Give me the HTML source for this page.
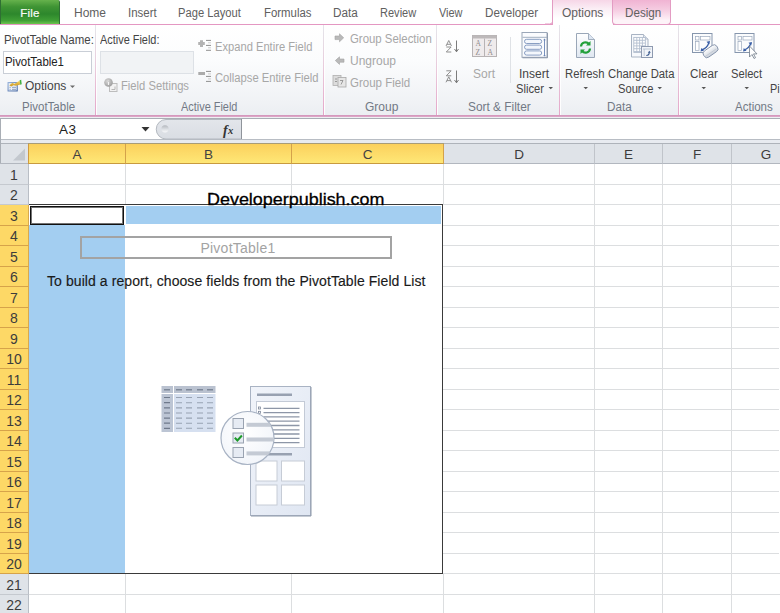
<!DOCTYPE html>
<html><head><meta charset="utf-8">
<style>
*{box-sizing:border-box;margin:0;padding:0}
html,body{width:780px;height:613px;overflow:hidden;background:#fff}
body{position:relative;font-family:"Liberation Sans",sans-serif;font-size:11px;color:#444}
.a{position:absolute;white-space:nowrap}
.t{font-size:12px;line-height:14px;transform:scaleX(0.91);transform-origin:0 0}
/* tab bar */
#tabbar{left:0;top:0;width:780px;height:24px;background:#fff}
#file{left:0;top:0;width:60px;height:24px;border-radius:0 2px 0 0;background:linear-gradient(#66b24c 0%,#3f9434 28%,#2d872c 58%,#3f9e35 85%,#6cc450 100%);border-left:1px solid #2f6f33;border-right:1px solid #2f6f33;color:#f4f8f2;text-align:center;line-height:26px;font-size:11.5px;letter-spacing:0.2px;-webkit-text-stroke:0.2px #fff}
.tab{top:6px;color:#606060;transform:none}
#ribbon{left:0;top:24px;width:780px;height:92px;background:linear-gradient(#ffffff 0%,#fbfcfd 40%,#f0f2f5 85%,#ebeef2 100%);border-top:1px solid #e497c2}
#opttab{left:552px;top:0;width:61px;height:25px;border-left:1px solid #e39cc3;background:linear-gradient(#f6d6e7,#fbeef5 35%,#ffffff 75%)}
#destab{left:612px;top:0;width:59px;height:25px;border-radius:0 0 4px 4px;background:linear-gradient(#f0b3d3,#f6cfe3 45%,#fdf3f8 85%);border:1px solid #e39cc3;border-top:none}
.sep{top:25px;width:2px;height:90px;background:linear-gradient(90deg,transparent 0,transparent 0) ,linear-gradient(#e4e6ea,#e9c9db 50%,#e5a6c9);background-size:1px 100%;background-repeat:no-repeat;border-right:1px solid rgba(255,255,255,0.9)}
.glabel{top:100px;color:#727985;font-size:12px;line-height:14px;transform:scaleX(0.91);transform-origin:0 0}
.dis{color:#a7a7a7}
#rbbottom{left:0;top:115px;width:780px;height:2px;background:linear-gradient(#cf93b8,#e2aacb)}
#rbgray{left:0;top:117px;width:780px;height:2px;background:linear-gradient(#eef0f3 0,#eef0f3 50%,#a9aeb5 50%)}
/* formula bar */
#fbar{left:0;top:119px;width:780px;height:20px;background:#fff}
#fbline{left:0;top:139px;width:780px;height:1px;background:#b8bdc4}
#fbstrip{left:0;top:140px;width:780px;height:3px;background:#e8ebf0}
/* grid */
.ch{top:143px;height:21px;background:#dfe3e8;border-right:1px solid #c0c4ca;border-bottom:1px solid #b2b7bf;text-align:center;line-height:23px;font-size:13.5px;color:#3c3c3c}
.chs{background:linear-gradient(#fbcf5c,#fee776);border-right:1px solid #d4a24a;border-bottom:1px solid #c89a3f;color:#424242}
.rh{left:0;width:29px;background:#dfe3e8;border-right:1px solid #b9bec5;border-bottom:1px solid #c5c9cf;text-align:center;font-size:14px;color:#3c3c3c;padding-top:1px}
.rhs{background:#fdd866;border-right:1px solid #d9a94e;border-bottom:1px solid #d6a34a}
.gv{width:1px;background:#dcdee0}
.gh{height:1px;background:#dcdee0}
</style></head><body>
<div id="tabbar" class="a"></div>
<div id="ribbon" class="a"></div>
<div id="opttab" class="a"></div>
<div id="destab" class="a"></div>
<svg class="a" style="left:545px;top:18px" width="10" height="8"><path d="M7.5 0v3.5q0 2.5-3 2.5h-5" fill="none" stroke="#e39cc3" stroke-width="1"/></svg>
<div id="file" class="a">File</div>
<div class="a t tab" style="left:74px">Home</div>
<div class="a t tab" style="left:128px;transform:scaleX(0.957)">Insert</div>
<div class="a t tab" style="left:178px;transform:scaleX(0.932)">Page Layout</div>
<div class="a t tab" style="left:264px;transform:scaleX(0.949)">Formulas</div>
<div class="a t tab" style="left:333px;transform:scaleX(0.98)">Data</div>
<div class="a t tab" style="left:380px;transform:scaleX(0.92)">Review</div>
<div class="a t tab" style="left:439px;transform:scaleX(0.91)">View</div>
<div class="a t tab" style="left:485px;transform:scaleX(0.97)">Developer</div>
<div class="a t tab" style="left:562px">Options</div>
<div class="a t tab" style="left:625px;transform:scaleX(0.97)">Design</div>

<!-- ribbon groups -->
<div class="a sep" style="left:95px"></div>
<div class="a sep" style="left:323px"></div>
<div class="a sep" style="left:436px"></div>
<div class="a sep" style="left:559px"></div>
<div class="a sep" style="left:678px"></div>

<div class="a t" style="left:4px;top:33px;transform:scaleX(0.955)">PivotTable Name:</div>
<div class="a" style="left:3px;top:51px;width:89px;height:23px;border:1px solid #c9ced6;background:#fff"></div>
<div class="a t" style="left:5px;top:55px;color:#222;transform:scaleX(0.95)">PivotTable1</div>
<div class="a t" style="left:25px;top:79px;transform:scaleX(1.0)">Options</div>
<div class="a glabel" style="left:22px;transform:scaleX(0.96)">PivotTable</div>

<div class="a t" style="left:100px;top:33px;transform:scaleX(0.91)">Active Field:</div>
<div class="a" style="left:100px;top:51px;width:94px;height:23px;border:1px solid #dde1e6;background:#f1f3f5"></div>
<div class="a t dis" style="left:121px;top:79px;transform:scaleX(0.935)">Field Settings</div>
<div class="a t dis" style="left:215px;top:40px;transform:scaleX(0.93)">Expand Entire Field</div>
<div class="a t dis" style="left:215px;top:71px;transform:scaleX(0.935)">Collapse Entire Field</div>
<div class="a glabel" style="left:181px;transform:scaleX(0.91)">Active Field</div>

<div class="a t dis" style="left:350px;top:32px;transform:scaleX(0.95)">Group Selection</div>
<div class="a t dis" style="left:350px;top:54px;transform:scaleX(1.0)">Ungroup</div>
<div class="a t dis" style="left:350px;top:76px;transform:scaleX(0.96)">Group Field</div>
<div class="a glabel" style="left:365px;transform:scaleX(1.0)">Group</div>

<div class="a t dis" style="left:473px;top:67px;transform:scaleX(1.0)">Sort</div>
<div class="a t" style="left:519px;top:67px;transform:scaleX(1.0)">Insert</div>
<div class="a t" style="left:516px;top:82px;transform:scaleX(0.93)">Slicer</div>
<div class="a glabel" style="left:468px;transform:scaleX(0.99)">Sort &amp; Filter</div>

<div class="a t" style="left:565px;top:67px;transform:scaleX(0.94)">Refresh</div>
<div class="a t" style="left:608px;top:67px;transform:scaleX(0.94)">Change Data</div>
<div class="a t" style="left:618px;top:82px;transform:scaleX(0.93)">Source</div>
<div class="a glabel" style="left:607px;transform:scaleX(0.975)">Data</div>

<div class="a t" style="left:690px;top:67px;transform:scaleX(0.97)">Clear</div>
<div class="a t" style="left:731px;top:67px;transform:scaleX(0.93)">Select</div>
<div class="a t" style="left:770px;top:82px">Pi</div>
<div class="a glabel" style="left:735px;transform:scaleX(0.96)">Actions</div>

<svg class="a" style="left:0;top:0" width="780" height="145" viewBox="0 0 780 145">
 <defs>
  <linearGradient id="docg" x1="0" y1="0" x2="0" y2="1"><stop offset="0" stop-color="#ffffff"/><stop offset="1" stop-color="#dfe7f1"/></linearGradient>
  <linearGradient id="erg" x1="0" y1="0" x2="0" y2="1"><stop offset="0" stop-color="#ffffff"/><stop offset="1" stop-color="#c9d0da"/></linearGradient>
  <linearGradient id="pillg" x1="0" y1="0" x2="0" y2="1"><stop offset="0" stop-color="#e3e6eb"/><stop offset="1" stop-color="#d9dde3"/></linearGradient>
 </defs>
 <!-- Options icon -->
 <defs><linearGradient id="optg" x1="0" y1="0" x2="1" y2="1"><stop offset="0" stop-color="#9bb6dc"/><stop offset="1" stop-color="#4a6aa3"/></linearGradient>
 <linearGradient id="goldg" x1="0" y1="0" x2="0" y2="1"><stop offset="0" stop-color="#f7d560"/><stop offset="1" stop-color="#c99522"/></linearGradient></defs>
 <rect x="7.5" y="82" width="10.3" height="9.6" rx="0.6" fill="url(#optg)"/>
 <rect x="8.6" y="83.2" width="8" height="7.2" fill="#eef3fa"/>
 <path d="M9.5 87.3h1.2M12 87.3h4M9.5 89.3h1.2M12 89.3h4" stroke="#7f93b3" stroke-width="0.9"/>
 <path d="M9.3 85.3l3.2-2.6l1.8 1.3l5.2-3.2l0.9 3.6l-4.5 1.4l-2.4-0.6l-2.2 1.4z" fill="url(#goldg)"/>
 <path d="M19.6 80.2l1.6-0.5l0.5 4.5l-1.4 0.6z" fill="#3fae3f"/>
 <path d="M70 85.5h5l-2.5 2.5z" fill="#6b6b6b"/>
 <!-- Field settings icon -->
 <defs><radialGradient id="fsg" cx="0.4" cy="0.35" r="0.7"><stop offset="0" stop-color="#d8d8d8"/><stop offset="1" stop-color="#9a9a9a"/></radialGradient></defs>
 <rect x="109.5" y="83.5" width="7.5" height="8" fill="#f2f2f2" stroke="#bdbdbd" stroke-width="1"/>
 <path d="M111.5 89.5h3.5v-3" fill="none" stroke="#b0b0b0" stroke-width="0.9"/>
 <circle cx="108.5" cy="82.5" r="4.3" fill="url(#fsg)"/>
 <path d="M108.5 80.2v0.4M108.5 82v3" stroke="#f4f4f4" stroke-width="1.1"/>
 <!-- expand / collapse icons -->
 <path d="M198.2 43.6h6.6M201.5 40.3v6.6" stroke="#b3b3b3" stroke-width="3"/>
 <path d="M206 40.4h5M206 45.4h5M206 50.3h5" stroke="#8f8f8f" stroke-width="1"/>
 <path d="M208 42.8h3M208 47.8h3" stroke="#cdcdcd" stroke-width="1"/>
 <path d="M198.3 73.5h6.7" stroke="#ababab" stroke-width="3"/>
 <path d="M206 71.4h5M206 76.4h5M206 81.4h5" stroke="#8f8f8f" stroke-width="1"/>
 <path d="M208 73.9h3M208 78.9h3" stroke="#cdcdcd" stroke-width="1"/>
 <!-- group arrows -->
 <path d="M335 36h4.5v-2.2l4.2 4l-4.2 4v-2.2h-4.5z" fill="#b9b9b9" stroke="#a2a2a2" stroke-width="0.6"/>
 <path d="M344 59h-4.5v-2.2l-4.2 3.8l4.2 3.8v-2.2h4.5z" fill="#b9b9b9" stroke="#a2a2a2" stroke-width="0.6"/>
 <rect x="333" y="75.5" width="8" height="10" fill="#dcdcdc" stroke="#b0b0b0" stroke-width="0.8"/>
 <rect x="338" y="77.5" width="8" height="9.5" fill="#e6e6e6" stroke="#a8a8a8" stroke-width="0.8"/>
 <path d="M335 79h2M335 81.5h2M340 80.5h3l-2 4" fill="none" stroke="#888" stroke-width="0.8"/>
 <!-- sort icons -->
 <g fill="none" stroke="#858585" stroke-width="0.9">
  <path d="M446 46l2.75-5.5l2.75 5.5M446.9 44.3h3.7"/><path d="M446.3 47h4.8l-4.8 5h5"/>
  <path d="M446.3 70.8h4.8l-4.8 5h5"/><path d="M446 82.3l2.75-5.5l2.75 5.5M446.9 80.6h3.7"/>
 </g>
 <path d="M456.5 40.5v11M454.5 49l2 2.8l2-2.8M456.5 70.5v12M454.5 80l2 2.8l2-2.8" fill="none" stroke="#6d6d6d" stroke-width="0.9"/>
 <rect x="472.5" y="35.5" width="24" height="21" fill="#efebec" stroke="#b7b3b4" stroke-width="1"/>
 <rect x="472.5" y="35.5" width="24" height="3" fill="#bdb9ba"/>
 <path d="M484.5 38.5v18" stroke="#b7b3b4" stroke-width="1"/>
 <g font-family="Liberation Serif" font-size="7.5" fill="#8f8b8c">
  <text x="475.5" y="46">A</text><text x="475.5" y="54.5">Z</text>
  <text x="487.5" y="46">Z</text><text x="487.5" y="54.5">A</text>
 </g>
 <path d="M510.5 37v46" stroke="#dfe2e6" stroke-width="1"/>
 <!-- slicer -->
 <rect x="522" y="32.5" width="25" height="24.8" fill="#fbfcfe" stroke="#9ba7b8" stroke-width="1"/>
 <path d="M547.5 33v24.8h-25" fill="none" stroke="#7f8ca0" stroke-width="0.8"/>
 <path d="M522.5 37.3h24.5" stroke="#a3afc0" stroke-width="1"/>
 <rect x="524.5" y="39.3" width="17.2" height="4.2" rx="2.1" fill="#f4f7fc" stroke="#7c93bb" stroke-width="0.9"/>
 <rect x="524.5" y="45.1" width="17.2" height="4.2" rx="2.1" fill="#f4f7fc" stroke="#7c93bb" stroke-width="0.9"/>
 <rect x="524.5" y="50.9" width="17.2" height="4.2" rx="2.1" fill="#f4f7fc" stroke="#7c93bb" stroke-width="0.9"/>
 <path d="M544.5 39.5v16" stroke="#6a84b5" stroke-width="0.9"/>
 <path d="M543.2 40.2l1.3-1.6l1.3 1.6zM543.2 55l1.3 1.6l1.3-1.6z" fill="#6a84b5"/>
 <path d="M548.5 87h4.5l-2.25 2.3z" fill="#555"/>
 <!-- refresh -->
 <path d="M576.5 33.5h12l6 6v18h-18z" fill="url(#docg)" stroke="#9aa7b8" stroke-width="1"/>
 <path d="M588.5 33.5v6h6" fill="#dde6f2" stroke="#9aa7b8" stroke-width="0.9"/>
 <path d="M581 46.5a4.5 4.5 0 0 1 8-2.5" fill="none" stroke="#22a03a" stroke-width="2.2"/>
 <path d="M590.5 41v4.5h-4.5z" fill="#22a03a"/>
 <path d="M590 48.5a4.5 4.5 0 0 1 -8 2.5" fill="none" stroke="#22a03a" stroke-width="2.2"/>
 <path d="M580.5 54v-4.5h4.5z" fill="#22a03a"/>
 <path d="M583.5 87h4.5l-2.25 2.3z" fill="#555"/>
 <!-- change data source -->
 <path d="M631.5 34.5h12l4.5 4.5v18h-16.5z" fill="#f7f9fc" stroke="#a8b3c3" stroke-width="1"/>
 <path d="M643.5 34.5v4.5h4.5" fill="#dfe6f0" stroke="#a8b3c3" stroke-width="0.8"/>
 <rect x="633.8" y="37.5" width="11.5" height="15" fill="#fff" stroke="#aab6c8" stroke-width="0.8"/>
 <g stroke="#b3bfd0" stroke-width="0.9">
  <path d="M634 40.3h11M634 43.1h11M634 45.9h11M634 48.7h11M634 51.5h11"/>
  <path d="M636.8 37.5v15M639.6 37.5v15M642.4 37.5v15"/>
 </g>
 <rect x="641.5" y="46.5" width="11" height="11" fill="#f1f4f9" stroke="#8e9ab0" stroke-width="1"/>
 <path d="M643 49h8M644.2 49v7" stroke="#b0bbcc" stroke-width="0.8"/>
 <path d="M646.3 55.5q2.8 0 3-3.3" fill="none" stroke="#3b5a8e" stroke-width="1.2"/>
 <path d="M647.8 52.8l1.5-2l1.5 2z" fill="#3b5a8e"/>
 <path d="M657.5 87h4.5l-2.25 2.3z" fill="#555"/>
 <!-- clear -->
 <rect x="692.5" y="33.5" width="19.5" height="19" fill="#fbfcfd" stroke="#8696ad" stroke-width="1"/>
 <rect x="695.5" y="36.5" width="3.5" height="3.5" fill="#fff" stroke="#9aa8bc" stroke-width="0.7"/>
 <rect x="700.5" y="36.5" width="9.5" height="3.5" fill="#fff" stroke="#9aa8bc" stroke-width="0.7"/>
 <rect x="695.5" y="41.5" width="3.5" height="9" fill="#fff" stroke="#9aa8bc" stroke-width="0.7"/>
 <path d="M701.5 50q5.5-1.5 7.5-7.5" fill="none" stroke="#3a5fa6" stroke-width="1.3"/>
 <path d="M700.5 51.5l0.8-3.5l2.7 2.7z M710 41l-3.5 0.8l2.7 2.7z" fill="#3a5fa6"/>
 <rect x="702.5" y="47.5" width="16" height="7.5" rx="3.2" transform="rotate(-35 710.5 51.2)" fill="url(#erg)" stroke="#8593aa" stroke-width="0.9"/>
 <path d="M704.5 55.5l10.5-7.3" stroke="#b8c0cc" stroke-width="0.7" transform="translate(0.8 1)"/>
 <path d="M701.5 87h4.5l-2.25 2.3z" fill="#555"/>
 <!-- select -->
 <rect x="735" y="33.5" width="19" height="19" fill="#fbfcfd" stroke="#8696ad" stroke-width="1"/>
 <rect x="738" y="36.5" width="3.5" height="3.5" fill="#fff" stroke="#9aa8bc" stroke-width="0.7"/>
 <rect x="743" y="36.5" width="9" height="3.5" fill="#fff" stroke="#9aa8bc" stroke-width="0.7"/>
 <rect x="738" y="41.5" width="3.5" height="9" fill="#fff" stroke="#9aa8bc" stroke-width="0.7"/>
 <path d="M744 50q5-1.5 7-7" fill="none" stroke="#3a5fa6" stroke-width="1.3"/>
 <path d="M743 51.5l0.8-3.5l2.7 2.7z M752 42l-3.5 0.8l2.7 2.7z" fill="#3a5fa6"/>
 <path d="M749.5 46v11l2.5-2.5l2 4l1.5-0.8l-2-3.8h3.5z" fill="#fff" stroke="#6f7a88" stroke-width="0.8"/>
 <path d="M744.5 87h4.5l-2.25 2.3z" fill="#555"/>
</svg>
<div id="rbbottom" class="a"></div>
<div id="rbgray" class="a"></div>

<!-- formula bar -->
<div id="fbar" class="a"></div>
<div id="fbline" class="a"></div>
<div id="fbstrip" class="a"></div>
<svg class="a" style="left:0;top:0" width="780" height="145" viewBox="0 0 780 145">
 <defs><linearGradient id="pillg" x1="0" y1="0" x2="0" y2="1"><stop offset="0" stop-color="#e3e6eb"/><stop offset="1" stop-color="#d9dde3"/></linearGradient></defs>
 <!-- formula bar -->
 <path d="M141.5 127h8l-4 4.5z" fill="#333"/>
 <path d="M241.5 119.5h-75.5a9.75 9.75 0 0 0 0 19.5h75.5z" fill="url(#pillg)" stroke="#b4b9c0" stroke-width="1"/>
 <path d="M241.5 119v20" stroke="#8f949b" stroke-width="1"/>
 <defs><linearGradient id="dotg" x1="0" y1="0" x2="0" y2="1"><stop offset="0" stop-color="#b3b7bd"/><stop offset="0.6" stop-color="#dfe2e6"/><stop offset="1" stop-color="#f7f8fa"/></linearGradient></defs>
 <circle cx="165" cy="128.8" r="3.6" fill="url(#dotg)"/>
 <text x="223" y="134.5" font-family="Liberation Serif" font-style="italic" font-weight="bold" font-size="14" fill="#333">f</text>
 <text x="228" y="134" font-family="Liberation Serif" font-style="italic" font-weight="bold" font-size="10.5" fill="#333">x</text>
</svg>
<div class="a" style="left:59px;top:122px;font-size:13.5px;line-height:16px;letter-spacing:0.6px;color:#222">A3</div>

<!-- GRID -->
<div class="a" style="left:0;top:143px;width:29px;height:21px;background:#dfe3e8;border-right:1px solid #b9bec5;border-bottom:1px solid #b2b7bf"></div>
<svg class="a" style="left:0;top:143px" width="29" height="21"><polygon points="25,5.5 25,17.5 13,17.5" fill="#c3c8ce"/></svg>
<div class="a ch chs" style="left:29px;width:97px">A</div>
<div class="a ch chs" style="left:126px;width:166px">B</div>
<div class="a ch chs" style="left:292px;width:152px">C</div>
<div class="a ch" style="left:444px;width:151px">D</div>
<div class="a ch" style="left:595px;width:68px">E</div>
<div class="a ch" style="left:663px;width:69px">F</div>
<div class="a ch" style="left:732px;width:69px">G</div>
<div class="a rh" style="top:164px;height:21px;line-height:20px">1</div>
<div class="a rh" style="top:185px;height:20px;line-height:19px">2</div>
<div class="a rh rhs" style="top:205px;height:21px;line-height:20px">3</div>
<div class="a rh rhs" style="top:226px;height:20px;line-height:19px">4</div>
<div class="a rh rhs" style="top:246px;height:21px;line-height:20px">5</div>
<div class="a rh rhs" style="top:267px;height:20px;line-height:19px">6</div>
<div class="a rh rhs" style="top:287px;height:21px;line-height:20px">7</div>
<div class="a rh rhs" style="top:308px;height:20px;line-height:19px">8</div>
<div class="a rh rhs" style="top:328px;height:21px;line-height:20px">9</div>
<div class="a rh rhs" style="top:349px;height:20px;line-height:19px">10</div>
<div class="a rh rhs" style="top:369px;height:21px;line-height:20px">11</div>
<div class="a rh rhs" style="top:390px;height:20px;line-height:19px">12</div>
<div class="a rh rhs" style="top:410px;height:21px;line-height:20px">13</div>
<div class="a rh rhs" style="top:431px;height:20px;line-height:19px">14</div>
<div class="a rh rhs" style="top:451px;height:21px;line-height:20px">15</div>
<div class="a rh rhs" style="top:472px;height:20px;line-height:19px">16</div>
<div class="a rh rhs" style="top:492px;height:21px;line-height:20px">17</div>
<div class="a rh rhs" style="top:513px;height:20px;line-height:19px">18</div>
<div class="a rh rhs" style="top:533px;height:21px;line-height:20px">19</div>
<div class="a rh rhs" style="top:554px;height:20px;line-height:19px">20</div>
<div class="a rh" style="top:574px;height:21px;line-height:20px">21</div>
<div class="a rh" style="top:595px;height:20px;line-height:19px">22</div>
<div class="a gv" style="left:125px;top:164px;height:40px"></div>
<div class="a gv" style="left:125px;top:574px;height:39px"></div>
<div class="a gv" style="left:291px;top:164px;height:40px"></div>
<div class="a gv" style="left:291px;top:574px;height:39px"></div>
<div class="a gv" style="left:443px;top:164px;height:40px"></div>
<div class="a gv" style="left:443px;top:574px;height:39px"></div>
<div class="a gv" style="left:594px;top:164px;height:449px"></div>
<div class="a gv" style="left:662px;top:164px;height:449px"></div>
<div class="a gv" style="left:731px;top:164px;height:449px"></div>
<div class="a gh" style="left:29px;top:184px;width:751px"></div>
<div class="a gh" style="left:443px;top:225px;width:336px"></div>
<div class="a gh" style="left:443px;top:245px;width:336px"></div>
<div class="a gh" style="left:443px;top:266px;width:336px"></div>
<div class="a gh" style="left:443px;top:286px;width:336px"></div>
<div class="a gh" style="left:443px;top:307px;width:336px"></div>
<div class="a gh" style="left:443px;top:327px;width:336px"></div>
<div class="a gh" style="left:443px;top:348px;width:336px"></div>
<div class="a gh" style="left:443px;top:368px;width:336px"></div>
<div class="a gh" style="left:443px;top:389px;width:336px"></div>
<div class="a gh" style="left:443px;top:409px;width:336px"></div>
<div class="a gh" style="left:443px;top:430px;width:336px"></div>
<div class="a gh" style="left:443px;top:450px;width:336px"></div>
<div class="a gh" style="left:443px;top:471px;width:336px"></div>
<div class="a gh" style="left:443px;top:491px;width:336px"></div>
<div class="a gh" style="left:443px;top:512px;width:336px"></div>
<div class="a gh" style="left:443px;top:532px;width:336px"></div>
<div class="a gh" style="left:443px;top:553px;width:336px"></div>
<div class="a gh" style="left:29px;top:594px;width:751px"></div>
<div class="a gh" style="left:29px;top:614px;width:751px"></div>
<div class="a" style="left:29px;top:204px;width:414px;height:370px;border-top:1px solid #3a3a3a;border-right:1px solid #3a3a3a;border-bottom:1px solid #3a3a3a;background:#fff"></div>
<div class="a" style="left:29px;top:225px;width:96px;height:348px;background:#a3cef1"></div>
<div class="a" style="left:126px;top:206px;width:315px;height:18px;background:#a3cef1"></div>
<div class="a" style="left:30px;top:206px;width:94px;height:19px;border:1px solid #111;box-shadow:inset 0 0 0 1px rgba(0,0,0,0.55);background:#fff"></div>
<div class="a" style="left:0;top:143px;width:780px;height:1px;background:#aeb3ba"></div>
<div class="a" style="left:0;top:118px;width:1px;height:45px;background:#a9aeb5"></div>
<div class="a" style="left:28px;top:143px;width:1px;height:21px;background:#d09b40"></div>
<div class="a gh" style="left:443px;top:204px;width:337px"></div>
<div class="a gh" style="left:443px;top:573px;width:337px"></div>
<div class="a" style="left:28px;top:143px;width:416px;height:1px;background:#a89c78"></div>
<!-- /GRID -->
<!-- PIVOT -->
<div class="a" style="left:207px;top:191px;font-size:17px;line-height:18px;transform:scaleX(1.055);transform-origin:0 0;color:#000;-webkit-text-stroke:0.3px #000">Developerpublish.com</div>
<div class="a" style="left:80px;top:236px;width:312px;height:23px;border:2px solid #a3a3a3"></div>
<div class="a" style="left:82px;top:239px;width:312px;text-align:center;font-size:14px;line-height:18px;letter-spacing:0.25px;color:#a3a3a3">PivotTable1</div>
<div class="a" style="left:47px;top:273px;font-size:14px;line-height:17px;letter-spacing:0.08px;color:#1a1a1a;-webkit-text-stroke:0.15px #1a1a1a">To build a report, choose fields from the PivotTable Field List</div>
<svg class="a" style="left:150px;top:375px" width="170" height="150" viewBox="150 375 170 150">
 <!-- table -->
 <rect x="161.5" y="386" width="11.5" height="7" fill="#bac2d0"/>
 <rect x="174" y="386" width="41.5" height="7" fill="#bac2d0"/>
 <rect x="161.5" y="394" width="11.5" height="38" fill="#bcc5d4"/>
 <rect x="174" y="394" width="41.5" height="38" fill="#d6e0f0"/>
 <g stroke="#6f7a8b" stroke-width="1.2">
  <line x1="164" y1="389.8" x2="170" y2="389.8"/>
  <line x1="176" y1="389.8" x2="182" y2="389.8"/>
  <line x1="186" y1="389.8" x2="192" y2="389.8"/>
  <line x1="197" y1="389.8" x2="203" y2="389.8"/>
  <line x1="207" y1="389.8" x2="213" y2="389.8"/>
 </g>
 <g stroke="#6f7a8b" stroke-width="1.2">
  <path d="M164 397.5h6M164 402.7h6M164 407.9h6M164 413h6M164 418.1h6M164 423.2h6M164 428.3h6"/>
 </g>
 <g stroke="#98a2b2" stroke-width="1.1">
  <path d="M176 397.5h6M176 402.7h6M176 407.9h6M176 413h6M176 418.1h6M176 423.2h6M176 428.3h6"/>
  <path d="M186 397.5h6M186 402.7h6M186 407.9h6M186 413h6M186 418.1h6M186 423.2h6M186 428.3h6"/>
  <path d="M197 397.5h6M197 402.7h6M197 407.9h6M197 413h6M197 418.1h6M197 423.2h6M197 428.3h6"/>
  <path d="M207 397.5h6M207 402.7h6M207 407.9h6M207 413h6M207 418.1h6M207 423.2h6M207 428.3h6"/>
 </g>
 <!-- panel -->
 <defs>
  <linearGradient id="pg" x1="0" y1="0" x2="1" y2="1"><stop offset="0" stop-color="#f1f4fa"/><stop offset="1" stop-color="#dfe6f2"/></linearGradient>
  <radialGradient id="cg" cx="0.45" cy="0.4" r="0.6"><stop offset="0" stop-color="#ffffff"/><stop offset="1" stop-color="#f2f5fa"/></radialGradient>
  <clipPath id="cc"><circle cx="247.5" cy="438" r="26.5"/></clipPath>
 </defs>
 <rect x="250.5" y="386.5" width="60" height="129" fill="url(#pg)" stroke="#a9b3c3" stroke-width="1"/>
 <line x1="311" y1="387" x2="311" y2="516" stroke="#8e99aa" stroke-width="1"/>
 <line x1="251" y1="516" x2="311" y2="516" stroke="#8e99aa" stroke-width="1"/>
 <rect x="257" y="393.5" width="35" height="2.5" fill="#98a1b1"/>
 <rect x="256.5" y="401.5" width="48" height="46" fill="#fff" stroke="#c3cad6" stroke-width="1"/>
 <g stroke="#8d96a7" stroke-width="1.3">
  <path d="M263.5 408.3h36M263.5 412.6h36M263.5 416.9h36M263.5 421.2h36M263.5 425.5h36M263.5 429.8h36M263.5 434h36M263.5 438.3h36M263.5 442.6h36"/>
 </g>
 <rect x="258.5" y="407" width="2" height="2" fill="none" stroke="#7d879a" stroke-width="0.8"/>
 <rect x="258.5" y="411.3" width="2" height="2" fill="none" stroke="#7d879a" stroke-width="0.8"/>
 <rect x="257" y="453" width="35" height="2.5" fill="#98a1b1"/>
 <rect x="256" y="461" width="21" height="20" fill="#fff" stroke="#c6ccd6" stroke-width="1"/>
 <rect x="281.5" y="461" width="23" height="20" fill="#fff" stroke="#c6ccd6" stroke-width="1"/>
 <rect x="256" y="485" width="21" height="20" fill="#fff" stroke="#c6ccd6" stroke-width="1"/>
 <rect x="281.5" y="485" width="23" height="20" fill="#fff" stroke="#c6ccd6" stroke-width="1"/>
 <!-- magnifier circle -->
 <circle cx="247.5" cy="438" r="26.5" fill="url(#cg)" stroke="#a7b2c3" stroke-width="1.2"/>
 <g clip-path="url(#cc)">
  <rect x="246.5" y="422.8" width="40" height="4" fill="#c4cad4"/>
  <rect x="246.5" y="437.5" width="40" height="4" fill="#c4cad4"/>
  <rect x="246.5" y="451.4" width="40" height="4" fill="#c4cad4"/>
 </g>
 <rect x="233" y="418.5" width="10.5" height="10" fill="#e6ebf3" stroke="#9aa3b1" stroke-width="1"/>
 <rect x="233" y="433" width="10.5" height="10" fill="#e6ebf3" stroke="#9aa3b1" stroke-width="1"/>
 <rect x="233" y="447.5" width="10.5" height="10" fill="#e6ebf3" stroke="#9aa3b1" stroke-width="1"/>
 <path d="M234.8 437.8l2.6 2.7l4.5-5" fill="none" stroke="#1d9a2a" stroke-width="2"/>
</svg>
<!-- /PIVOT -->
</body></html>
